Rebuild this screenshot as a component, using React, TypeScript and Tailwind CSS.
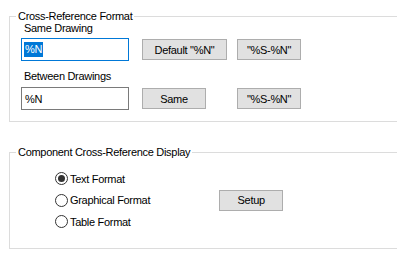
function Btn({ label, w, className = '' }: { label: string; w: string; className?: string }) {
  return (
    <div
      className={`${w} h-[21px] shrink-0 flex items-center justify-center bg-[#e1e1e1] border border-[#adadad] text-black ${className}`}
    >
      {label}
    </div>
  );
}

function Radio({ label, checked }: { label: string; checked?: boolean }) {
  return (
    <div className="flex items-center h-[21.5px]">
      <div className="w-[13px] h-[13px] rounded-full border border-[#333333] bg-white flex items-center justify-center">
        {checked && <div className="w-[7px] h-[7px] rounded-full bg-[#333333]" />}
      </div>
      <span className="ml-[2px]">{label}</span>
    </div>
  );
}

function GroupTitle({ title }: { title: string }) {
  return (
    <div className="-mt-[8px] ml-[6px] px-[2px] w-fit h-[14px] leading-[14px] bg-white">{title}</div>
  );
}

export default function App() {
  return (
    <div
      className="w-[397px] h-[261px] overflow-hidden bg-white text-black text-[11px] leading-[14px] tracking-[-0.3px]"
      style={{ fontFamily: '"Liberation Sans", Arial, sans-serif' }}
    >
      <div className="pt-[16px] pl-[9px]">
        {/* Cross-Reference Format */}
        <div className="h-[106px] border-l border-t border-b border-[#dcdcdc]">
          <GroupTitle title="Cross-Reference Format" />
          <div className="pl-[14px] -mt-[2px]">Same Drawing</div>
          <div className="flex items-start mt-[3px] pl-[11px]">
            <div className="w-[108px] h-[23px] border border-[#0078d7] flex items-center pl-[2px]">
              <span className="bg-[#0078d7] text-white h-[15px] leading-[15px] px-[1px]">%N</span>
            </div>
            <Btn label={'Default "%N"'} w="w-[85px]" className="ml-[13px] mt-[1px]" />
            <Btn label={'"%S-%N"'} w="w-[64px]" className="ml-[10px] mt-[1px]" />
          </div>
          <div className="pl-[14px] mt-[8px]">Between Drawings</div>
          <div className="flex items-start mt-[4px] pl-[11px]">
            <div className="w-[108px] h-[23px] border border-[#7a7a7a] flex items-center pl-[3px]">%N</div>
            <Btn label="Same" w="w-[64px]" className="ml-[13px] mt-[1px]" />
            <Btn label={'"%S-%N"'} w="w-[64px]" className="ml-[31px] mt-[1px]" />
          </div>
        </div>

        {/* Component Cross-Reference Display */}
        <div className="mt-[30px] h-[97px] border-l border-t border-b border-[#dcdcdc]">
          <GroupTitle title="Component Cross-Reference Display" />
          <div className="flex items-center pl-[45px] mt-[9px]">
            <div className="flex flex-col">
              <Radio label="Text Format" checked />
              <Radio label="Graphical Format" />
              <Radio label="Table Format" />
            </div>
            <Btn label="Setup" w="w-[64px]" className="ml-[69px]" />
          </div>
        </div>
      </div>
    </div>
  );
}
